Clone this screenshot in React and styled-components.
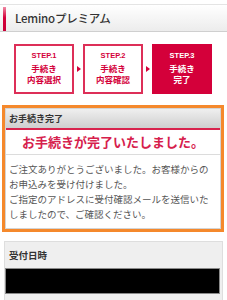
import React from "react";
import styled, { createGlobalStyle } from "styled-components";

const GlobalStyle = createGlobalStyle`
  body {
    margin: 0;
    background: #fff;
    font-family: "Noto Sans CJK JP", "Noto Sans", sans-serif;
  }
`;

const Page = styled.div`
  width: 227px;
  height: 300px;
  overflow: hidden;
  padding-top: 4px;
  box-sizing: border-box;
`;

const Header = styled.div`
  display: flex;
  align-items: center;
  height: 28px;
  box-sizing: border-box;
  border-top: 1px solid #e4e4e4;
  border-bottom: 1px solid #cfcfcf;
  background: linear-gradient(#ffffff, #ececec);
`;

const RedBar = styled.div`
  width: 3px;
  height: 24px;
  margin: 2px 9px 0 3px;
  background: linear-gradient(#f08aa4, #d4003a 45%, #c80036);
`;

const HeaderTitle = styled.div`
  font-size: 11.5px;
  font-weight: 500;
  color: #333;
  letter-spacing: -0.2px;
`;

const Steps = styled.div`
  display: flex;
  align-items: center;
  padding-left: 14px;
  margin-top: 12px;
`;

const StepBox = styled.div`
  width: 60px;
  height: 50px;
  box-sizing: border-box;
  border: 2px solid;
  padding-top: 5px;
  text-align: center;
  background: ${(p) => (p.$active ? "#d4003a" : "#fff")};
  border-color: ${(p) => (p.$active ? "#d4003a" : "#dd2f58")};
  color: ${(p) => (p.$active ? "#fff" : "#d4003a")};
`;

const StepNo = styled.div`
  font-family: "Liberation Sans", "Noto Sans CJK JP", sans-serif;
  font-size: 7.5px;
  font-weight: bold;
  line-height: 9px;
  margin-bottom: 3px;
`;

const StepText = styled.div`
  font-size: 8.5px;
  font-weight: bold;
  line-height: 11px;
`;

const Arrow = styled.div`
  width: 9px;
  display: flex;
  justify-content: center;

  &::before {
    content: "";
    border-left: 4px solid #d4003a;
    border-top: 3px solid transparent;
    border-bottom: 3px solid transparent;
  }
`;

const Highlight = styled.div`
  margin: 11px 3px 0 2px;
  border: 3px solid #f5892c;
`;

const Panel = styled.div`
  border: 1px solid #d4d4d4;
  background: #fff;
`;

const PanelHead = styled.div`
  height: 19px;
  line-height: 19px;
  padding-left: 3px;
  font-size: 9px;
  font-weight: bold;
  color: #333;
  background: linear-gradient(#efefef, #cfcfcf);
  border-bottom: 2px solid #d8234d;
`;

const DoneTitle = styled.div`
  height: 24px;
  line-height: 24px;
  text-align: center;
  font-size: 13px;
  font-weight: bold;
  color: #d6204c;
  border-bottom: 1px solid #dcdcdc;
`;

const Message = styled.p`
  margin: 0;
  padding: 7px 5px 6px 3px;
  font-size: 9.5px;
  line-height: 15px;
  color: #555;
`;

const InfoBox = styled.div`
  margin: 9px 4px 0 4px;
  background: #efefef;
  border: 1px solid #dedede;
  height: 80px;
`;

const InfoLabel = styled.div`
  height: 26px;
  line-height: 26px;
  padding-left: 4px;
  font-size: 9.5px;
  font-weight: bold;
  color: #333;
`;

const Masked = styled.div`
  height: 26px;
  box-sizing: border-box;
  margin-right: 2px;
  background: #000;
  border: 1px solid #8a8a8a;
`;

const steps = [
  { no: "STEP.1", lines: ["手続き", "内容選択"] },
  { no: "STEP.2", lines: ["手続き", "内容確認"] },
  { no: "STEP.3", lines: ["手続き", "完了"], active: true },
];

export default function App() {
  return (
    <Page>
      <GlobalStyle />
      <Header>
        <RedBar />
        <HeaderTitle>Leminoプレミアム</HeaderTitle>
      </Header>

      <Steps>
        {steps.map((s, i) => (
          <React.Fragment key={s.no}>
            {i > 0 && <Arrow />}
            <StepBox $active={s.active}>
              <StepNo>{s.no}</StepNo>
              {s.lines.map((l) => (
                <StepText key={l}>{l}</StepText>
              ))}
            </StepBox>
          </React.Fragment>
        ))}
      </Steps>

      <Highlight>
        <Panel>
          <PanelHead>お手続き完了</PanelHead>
          <DoneTitle>お手続きが完了いたしました。</DoneTitle>
          <Message>
            ご注文ありがとうございました。お客様からのお申込みを受け付けました。
            <br />
            ご指定のアドレスに受付確認メールを送信いたしましたので、ご確認ください。
          </Message>
        </Panel>
      </Highlight>

      <InfoBox>
        <InfoLabel>受付日時</InfoLabel>
        <Masked />
      </InfoBox>
    </Page>
  );
}
